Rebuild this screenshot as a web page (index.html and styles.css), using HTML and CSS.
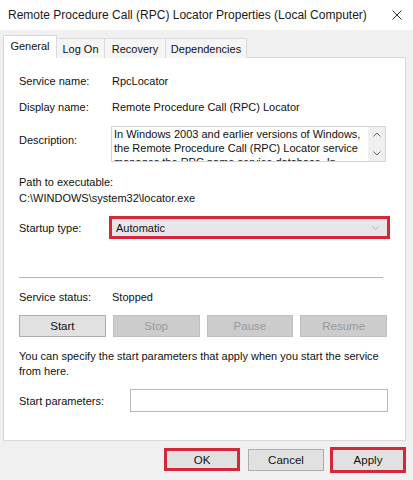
FILE: index.html
```html
<!DOCTYPE html>
<html>
<head>
<meta charset="utf-8">
<link rel="stylesheet" href="styles.css">
</head>
<body>
<div class="dialog">
  <div class="titlebar">
    <span class="title">Remote Procedure Call (RPC) Locator Properties (Local Computer)</span>
    <svg class="close" width="10" height="10" viewBox="0 0 10 10"><path d="M0.5 0.5 L9.5 9.5 M9.5 0.5 L0.5 9.5" stroke="#333" stroke-width="1" fill="none"/></svg>
  </div>
  <div class="client">
    <div class="tabs">
      <div class="tab active w1">General</div>
      <div class="tab w2">Log On</div>
      <div class="tab w3">Recovery</div>
      <div class="tab w4">Dependencies</div>
    </div>
    <div class="panel">
      <div class="row r-service">
        <span class="label">Service name:</span>
        <span class="value">RpcLocator</span>
      </div>
      <div class="row r-display">
        <span class="label">Display name:</span>
        <span class="value">Remote Procedure Call (RPC) Locator</span>
      </div>
      <div class="row r-desc">
        <span class="label desc-label">Description:</span>
        <div class="textbox">
          <div class="textbox-text">In Windows 2003 and earlier versions of Windows,<br>the Remote Procedure Call (RPC) Locator service<br>manages the RPC name service database. In</div>
          <div class="vscroll">
            <svg width="8" height="5" viewBox="0 0 8 5"><path d="M0.5 4.5 L4 1 L7.5 4.5" stroke="#707070" stroke-width="1" fill="none"/></svg>
            <svg width="8" height="5" viewBox="0 0 8 5"><path d="M0.5 0.5 L4 4 L7.5 0.5" stroke="#707070" stroke-width="1" fill="none"/></svg>
          </div>
        </div>
      </div>
      <div class="path">
        <div>Path to executable:</div>
        <div>C:\WINDOWS\system32\locator.exe</div>
      </div>
      <div class="row r-startup">
        <span class="label startup-label">Startup type:</span>
        <div class="combo">
          <span>Automatic</span>
          <svg width="7" height="4" viewBox="0 0 7 4"><path d="M0.5 0.5 L3.5 3.5 L6.5 0.5" stroke="#b0b0b0" stroke-width="1" fill="none"/></svg>
        </div>
      </div>
      <div class="separator"></div>
      <div class="row r-status">
        <span class="label">Service status:</span>
        <span class="value">Stopped</span>
      </div>
      <div class="svc-buttons">
        <div class="btn">Start</div>
        <div class="btn disabled">Stop</div>
        <div class="btn disabled">Pause</div>
        <div class="btn disabled">Resume</div>
      </div>
      <p class="hint">You can specify the start parameters that apply when you start the service<br>from here.</p>
      <div class="row r-params">
        <span class="label params-label">Start parameters:</span>
        <div class="input"></div>
      </div>
    </div>
    <div class="footer">
      <div class="btn dlg ok marked">OK</div>
      <div class="btn dlg cancel">Cancel</div>
      <div class="btn dlg apply marked">Apply</div>
    </div>
  </div>
</div>
</body>
</html>
```

FILE: styles.css
```css
html, body {
  margin: 0;
  padding: 0;
}
body {
  width: 413px;
  height: 480px;
  overflow: hidden;
  background: #f0f0f0;
  font-family: "Liberation Sans", Arial, sans-serif;
  font-size: 11px;
  color: #111;
}
.dialog {
  width: 413px;
  height: 480px;
  display: flex;
  flex-direction: column;
}
.titlebar {
  height: 30px;
  flex: none;
  background: #fff;
  display: flex;
  align-items: center;
  justify-content: space-between;
  padding: 0 11px 0 8px;
}
.title {
  font-size: 12px;
  color: #1a1a1a;
  letter-spacing: 0;
}
.close {
  display: block;
  margin-top: 0;
}
.client {
  flex: 1;
  padding: 0 7px 0 3px;
  display: flex;
  flex-direction: column;
}
.tabs {
  margin-top: 6px;
  height: 22px;
  display: flex;
  align-items: flex-end;
  position: relative;
  z-index: 1;
  margin-bottom: -1px;
}
.tab {
  height: 20px;
  box-sizing: border-box;
  border: 1px solid #dadada;
  border-bottom: none;
  background: #f5f5f5;
  display: flex;
  align-items: center;
  justify-content: center;
  margin-left: -1px;
  padding-top: 1px;
}
.tab.active {
  height: 23px;
  background: #fff;
  margin-left: 0;
  padding-top: 0;
  padding-bottom: 3px;
  z-index: 2;
}
.w1 { width: 54px; }
.w2 { width: 49px; }
.w3 { width: 62px; }
.w4 { width: 82px; }
.panel {
  height: 384px;
  box-sizing: border-box;
  background: #fff;
  border: 1px solid #dadada;
  padding: 0 0 0 15px;
  display: flex;
  flex-direction: column;
}
.row {
  display: flex;
  align-items: center;
}
.label {
  width: 93px;
  flex: none;
  line-height: 14px;
}
.value {
  line-height: 14px;
}
.r-service { margin-top: 16px; }
.r-display { margin-top: 12px; }
.r-desc {
  margin-top: 12px;
  align-items: flex-start;
}
.desc-label {
  width: 92px;
  padding-top: 7px;
}
.textbox {
  width: 275px;
  height: 36px;
  box-sizing: border-box;
  border: 1px solid #d4d4d4;
  display: flex;
  overflow: hidden;
  background: #fff;
}
.textbox-text {
  flex: 1;
  line-height: 14px;
  padding-left: 2px;
  white-space: nowrap;
  overflow: hidden;
}
.vscroll {
  width: 17px;
  background: #f0f0f0;
  display: flex;
  flex-direction: column;
  align-items: center;
  justify-content: space-between;
  padding: 5px 0 5px;
  box-sizing: border-box;
}
.vscroll svg { display: block; }
.path {
  margin-top: 12px;
  line-height: 16px;
}
.r-startup { margin-top: 10px; }
.startup-label { width: 90px; }
.combo {
  width: 281px;
  height: 23px;
  box-sizing: border-box;
  border: 3px solid #d3283a;
  background: #e6e6e6;
  display: flex;
  align-items: center;
  justify-content: space-between;
  padding: 0 8px 0 4px;
}
.combo svg { display: block; }
.separator {
  margin-top: 38px;
  width: 364px;
  height: 1px;
  background: #b4b4b4;
}
.r-status { margin-top: 12px; }
.svc-buttons {
  margin-top: 11px;
  width: 368px;
  display: grid;
  grid-template-columns: repeat(4, 1fr);
  column-gap: 7px;
}
.btn {
  height: 22px;
  box-sizing: border-box;
  border: 1px solid #adadad;
  background: #e1e1e1;
  display: flex;
  align-items: center;
  justify-content: center;
  font-size: 11.5px;
}
.btn.disabled {
  background: #cccccc;
  border-color: #bfbfbf;
  color: #9a9a9a;
}
.hint {
  margin: 12px 0 0;
  line-height: 15px;
}
.r-params { margin-top: 10px; }
.params-label { width: 111px; }
.input {
  width: 258px;
  height: 23px;
  box-sizing: border-box;
  border: 1px solid #b8b8b8;
  background: #fff;
}
.footer {
  padding-top: 7px;
  display: flex;
  justify-content: flex-end;
  align-items: flex-start;
}
.dlg {
  width: 76px;
}
.ok { height: 23px; }
.cancel {
  height: 22px;
  margin: 1px 6px 0 8px;
}
.apply {
  height: 26px;
  margin-top: -1px;
}
.marked {
  border: 3px solid #d3283a;
}
```
